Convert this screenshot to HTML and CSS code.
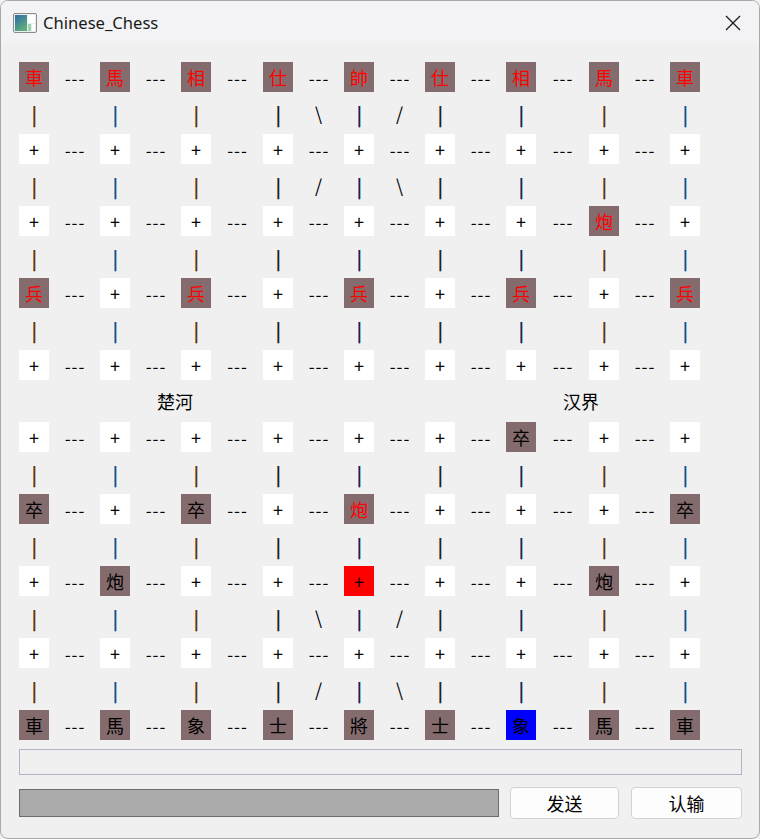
FILE: index.html
```html
<!DOCTYPE html>
<html lang="zh">
<head>
<meta charset="utf-8">
<title>Chinese_Chess</title>
<link rel="stylesheet" href="styles.css">
</head>
<body>
<div class="window">
  <div class="titlebar">
    <svg class="appicon" width="24" height="20" viewBox="0 0 24 20">
      <defs>
        <linearGradient id="g" x1="0" y1="0" x2="0.6" y2="1">
          <stop offset="0" stop-color="#2f6aa8"/>
          <stop offset="1" stop-color="#5fae78"/>
        </linearGradient>
      </defs>
      <rect x="0.5" y="0.5" width="23" height="19" rx="1.5" fill="#e9eef2" stroke="#8c8c8c"/>
      <rect x="2" y="2" width="12" height="16" fill="url(#g)"/>
      <rect x="15" y="2" width="7" height="8" fill="#ffffff"/>
      <rect x="15" y="11" width="3" height="7" fill="#9fd3b0"/>
      <rect x="19" y="11" width="3" height="7" fill="#ffffff"/>
    </svg>
    <span class="title">Chinese_Chess</span>
    <svg class="close" width="16" height="16" viewBox="0 0 16 16">
      <path d="M1 1 L15 15 M15 1 L1 15" stroke="#1b1b1b" stroke-width="1.3" fill="none"/>
    </svg>
  </div>
  <div class="client">
    <div class="board">
      <!-- row 0 -->
      <div class="c p r">車</div><div class="c h">---</div><div class="c p r">馬</div><div class="c h">---</div><div class="c p r">相</div><div class="c h">---</div><div class="c p r">仕</div><div class="c h">---</div><div class="c p r">帥</div><div class="c h">---</div><div class="c p r">仕</div><div class="c h">---</div><div class="c p r">相</div><div class="c h">---</div><div class="c p r">馬</div><div class="c h">---</div><div class="c p r">車</div>
      <!-- row 1 -->
      <div class="c v k0">|</div><i></i><div class="c v k1">|</div><i></i><div class="c v k2">|</div><i></i><div class="c v k3">|</div><div class="c d">\</div><div class="c v k4">|</div><div class="c d">/</div><div class="c v k5">|</div><i></i><div class="c v k6">|</div><i></i><div class="c v k7">|</div><i></i><div class="c v k8">|</div>
      <!-- row 2 -->
      <div class="c e">+</div><div class="c h">---</div><div class="c e">+</div><div class="c h">---</div><div class="c e">+</div><div class="c h">---</div><div class="c e">+</div><div class="c h">---</div><div class="c e">+</div><div class="c h">---</div><div class="c e">+</div><div class="c h">---</div><div class="c e">+</div><div class="c h">---</div><div class="c e">+</div><div class="c h">---</div><div class="c e">+</div>
      <!-- row 3 -->
      <div class="c v k0">|</div><i></i><div class="c v k1">|</div><i></i><div class="c v k2">|</div><i></i><div class="c v k3">|</div><div class="c d">/</div><div class="c v k4">|</div><div class="c d">\</div><div class="c v k5">|</div><i></i><div class="c v k6">|</div><i></i><div class="c v k7">|</div><i></i><div class="c v k8">|</div>
      <!-- row 4 -->
      <div class="c e">+</div><div class="c h">---</div><div class="c e">+</div><div class="c h">---</div><div class="c e">+</div><div class="c h">---</div><div class="c e">+</div><div class="c h">---</div><div class="c e">+</div><div class="c h">---</div><div class="c e">+</div><div class="c h">---</div><div class="c e">+</div><div class="c h">---</div><div class="c p r">炮</div><div class="c h">---</div><div class="c e">+</div>
      <!-- row 5 -->
      <div class="c v k0">|</div><i></i><div class="c v k1">|</div><i></i><div class="c v k2">|</div><i></i><div class="c v k3">|</div><i></i><div class="c v k4">|</div><i></i><div class="c v k5">|</div><i></i><div class="c v k6">|</div><i></i><div class="c v k7">|</div><i></i><div class="c v k8">|</div>
      <!-- row 6 -->
      <div class="c p r">兵</div><div class="c h">---</div><div class="c e">+</div><div class="c h">---</div><div class="c p r">兵</div><div class="c h">---</div><div class="c e">+</div><div class="c h">---</div><div class="c p r">兵</div><div class="c h">---</div><div class="c e">+</div><div class="c h">---</div><div class="c p r">兵</div><div class="c h">---</div><div class="c e">+</div><div class="c h">---</div><div class="c p r">兵</div>
      <!-- row 7 -->
      <div class="c v k0">|</div><i></i><div class="c v k1">|</div><i></i><div class="c v k2">|</div><i></i><div class="c v k3">|</div><i></i><div class="c v k4">|</div><i></i><div class="c v k5">|</div><i></i><div class="c v k6">|</div><i></i><div class="c v k7">|</div><i></i><div class="c v k8">|</div>
      <!-- row 8 -->
      <div class="c e">+</div><div class="c h">---</div><div class="c e">+</div><div class="c h">---</div><div class="c e">+</div><div class="c h">---</div><div class="c e">+</div><div class="c h">---</div><div class="c e">+</div><div class="c h">---</div><div class="c e">+</div><div class="c h">---</div><div class="c e">+</div><div class="c h">---</div><div class="c e">+</div><div class="c h">---</div><div class="c e">+</div>
      <!-- row 9 river -->
      <div class="river"><span>楚河</span><span>汉界</span></div>
      <!-- row 10 -->
      <div class="c e">+</div><div class="c h">---</div><div class="c e">+</div><div class="c h">---</div><div class="c e">+</div><div class="c h">---</div><div class="c e">+</div><div class="c h">---</div><div class="c e">+</div><div class="c h">---</div><div class="c e">+</div><div class="c h">---</div><div class="c p">卒</div><div class="c h">---</div><div class="c e">+</div><div class="c h">---</div><div class="c e">+</div>
      <!-- row 11 -->
      <div class="c v k0">|</div><i></i><div class="c v k1">|</div><i></i><div class="c v k2">|</div><i></i><div class="c v k3">|</div><i></i><div class="c v k4">|</div><i></i><div class="c v k5">|</div><i></i><div class="c v k6">|</div><i></i><div class="c v k7">|</div><i></i><div class="c v k8">|</div>
      <!-- row 12 -->
      <div class="c p">卒</div><div class="c h">---</div><div class="c e">+</div><div class="c h">---</div><div class="c p">卒</div><div class="c h">---</div><div class="c e">+</div><div class="c h">---</div><div class="c p r">炮</div><div class="c h">---</div><div class="c e">+</div><div class="c h">---</div><div class="c e">+</div><div class="c h">---</div><div class="c e">+</div><div class="c h">---</div><div class="c p">卒</div>
      <!-- row 13 -->
      <div class="c v k0">|</div><i></i><div class="c v k1">|</div><i></i><div class="c v k2">|</div><i></i><div class="c v k3">|</div><i></i><div class="c v k4">|</div><i></i><div class="c v k5">|</div><i></i><div class="c v k6">|</div><i></i><div class="c v k7">|</div><i></i><div class="c v k8">|</div>
      <!-- row 14 -->
      <div class="c e">+</div><div class="c h">---</div><div class="c p">炮</div><div class="c h">---</div><div class="c e">+</div><div class="c h">---</div><div class="c e">+</div><div class="c h">---</div><div class="c e sel">+</div><div class="c h">---</div><div class="c e">+</div><div class="c h">---</div><div class="c e">+</div><div class="c h">---</div><div class="c p">炮</div><div class="c h">---</div><div class="c e">+</div>
      <!-- row 15 -->
      <div class="c v k0">|</div><i></i><div class="c v k1">|</div><i></i><div class="c v k2">|</div><i></i><div class="c v k3">|</div><div class="c d">\</div><div class="c v k4">|</div><div class="c d">/</div><div class="c v k5">|</div><i></i><div class="c v k6">|</div><i></i><div class="c v k7">|</div><i></i><div class="c v k8">|</div>
      <!-- row 16 -->
      <div class="c e">+</div><div class="c h">---</div><div class="c e">+</div><div class="c h">---</div><div class="c e">+</div><div class="c h">---</div><div class="c e">+</div><div class="c h">---</div><div class="c e">+</div><div class="c h">---</div><div class="c e">+</div><div class="c h">---</div><div class="c e">+</div><div class="c h">---</div><div class="c e">+</div><div class="c h">---</div><div class="c e">+</div>
      <!-- row 17 -->
      <div class="c v k0">|</div><i></i><div class="c v k1">|</div><i></i><div class="c v k2">|</div><i></i><div class="c v k3">|</div><div class="c d">/</div><div class="c v k4">|</div><div class="c d">\</div><div class="c v k5">|</div><i></i><div class="c v k6">|</div><i></i><div class="c v k7">|</div><i></i><div class="c v k8">|</div>
      <!-- row 18 -->
      <div class="c p">車</div><div class="c h">---</div><div class="c p">馬</div><div class="c h">---</div><div class="c p">象</div><div class="c h">---</div><div class="c p">士</div><div class="c h">---</div><div class="c p">將</div><div class="c h">---</div><div class="c p">士</div><div class="c h">---</div><div class="c p blue">象</div><div class="c h">---</div><div class="c p">馬</div><div class="c h">---</div><div class="c p">車</div>
    </div>
    <div class="input"></div>
    <div class="actions">
      <div class="bar"></div>
      <div class="btn send">发送</div>
      <div class="btn giveup">认输</div>
    </div>
  </div>
</div>
</body>
</html>
```

FILE: styles.css
```css
html, body {
  margin: 0;
  padding: 0;
  background: #f0f0f0;
}
.window {
  width: 760px;
  height: 839px;
  box-sizing: border-box;
  border: 1px solid #a9a9a9;
  border-radius: 8px;
  overflow: hidden;
  background: #f0f0f0;
  font-family: "Noto Sans CJK SC", "Noto Sans", sans-serif;
}
.titlebar {
  height: 43px;
  background: #f3f3f6;
  display: flex;
  align-items: center;
}
.appicon {
  margin-left: 12px;
  margin-top: 1px;
}
.title {
  margin-left: 6px;
  font-family: "Noto Sans", "Open Sans", sans-serif;
  font-size: 16.6px;
  color: #1a1a1a;
}
.close {
  margin-left: auto;
  margin-right: 18px;
  width: 16px;
  height: 16px;
}
.client {
  padding: 18px 17px 0 18px;
}
.board {
  display: grid;
  grid-template-columns: 30px 51px 30px 51px 30px 52px 30px 51px 30px 51px 30px 51px 30px 53px 30px 51px 30px;
  grid-auto-rows: 30px;
  row-gap: 6px;
  font-size: 18px;
  color: #000;
}
.c {
  display: flex;
  align-items: center;
  justify-content: center;
  line-height: 1;
}
.p {
  background: #846c6e;
  color: #000;
}
.p.r {
  color: #ff0000;
}
.e {
  background: #ffffff;
  font-size: 18px;
}
.sel {
  background: #ff0000;
}
.blue {
  background: #0000ff;
}
.h {
  font-size: 17px;
  letter-spacing: 1px;
  padding-left: 1px;
}
.v {
  font-size: 19px;
}
.d {
  font-size: 18px;
  color: #000;
}
.k0 { color: #6e3308; text-shadow: 0.5px 0 0 #3a1a04; }
.k1 { color: #0a5aa6; text-shadow: 0.5px 0 0 #06305a; }
.k2 { color: #6e3308; text-shadow: 0.5px 0 0 #3a1a04; }
.k3 { color: #1a1a26; text-shadow: 0.5px 0 0 #1a1a26; }
.k4 { color: #10206a; text-shadow: 0.5px 0 0 #0a1440; }
.k5 { color: #1a1a26; text-shadow: 0.5px 0 0 #1a1a26; }
.k6 { color: #12226c; text-shadow: 0.5px 0 0 #0a1440; }
.k7 { color: #6e3308; text-shadow: 0.5px 0 0 #3a1a04; }
.k8 { color: #0a5aa6; text-shadow: 0.5px 0 0 #06305a; }
.river {
  grid-column: 1 / -1;
  display: flex;
  align-items: center;
  padding-left: 138px;
  gap: 370px;
  font-size: 18px;
}
.input {
  margin-top: 9px;
  height: 24px;
  border: 1px solid #b4b4c8;
  background: #f0f0f0;
}
.actions {
  margin-top: 12px;
  display: flex;
  align-items: center;
  height: 32px;
}
.bar {
  flex: 1;
  height: 26px;
  background: #aaaaaa;
  border: 1px solid #6c6c6c;
}
.btn {
  box-sizing: border-box;
  height: 32px;
  border: 1px solid #d2d2d2;
  border-radius: 4px;
  background: #fdfdfd;
  display: flex;
  align-items: center;
  justify-content: center;
  font-size: 18px;
  color: #000;
}
.send {
  margin-left: 11px;
  width: 109px;
}
.giveup {
  margin-left: 12px;
  width: 111px;
}
```
